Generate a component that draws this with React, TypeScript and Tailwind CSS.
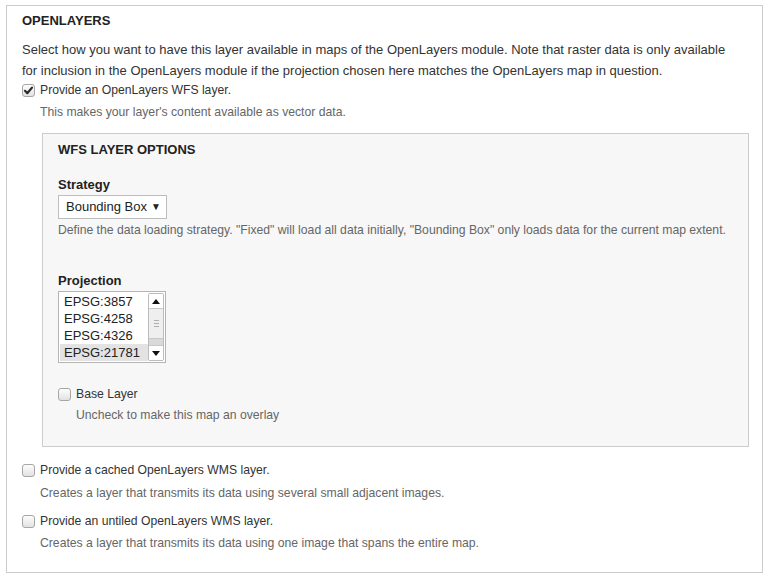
import { FC } from "react";

const Check: FC<{ checked?: boolean }> = ({ checked }) => (
  <span className="relative inline-block w-[13px] h-[13px] shrink-0 rounded-[3px] border border-[#a6a6a6] bg-gradient-to-b from-[#fdfdfd] to-[#e2e2e2]">
    {checked && (
      <svg viewBox="0 0 13 13" className="absolute left-[-1px] top-[-1px] w-[13px] h-[13px]">
        <path d="M3 6.8 L5.3 9.2 L10 3.6" fill="none" stroke="#2a2a2a" strokeWidth="2.2" strokeLinecap="round" strokeLinejoin="round" />
      </svg>
    )}
  </span>
);

const CheckRow: FC<{ label: string; checked?: boolean; className?: string }> = ({ label, checked, className }) => (
  <div className={"flex items-center gap-[5px] h-[18px] leading-[18px] text-[12.2px] text-[#333] " + (className || "")}>
    <Check checked={checked} />
    <span>{label}</span>
  </div>
);

const Desc: FC<{ text: string; className?: string }> = ({ text, className }) => (
  <div className={"text-[12.2px] leading-[16px] text-[#666] " + (className || "")}>{text}</div>
);

export default function App() {
  return (
    <div className="bg-white w-[767px] h-[578px] pt-[5px] pl-[6px] font-['Liberation_Sans',Arial,sans-serif]">
      <div className="w-[757px] h-[568px] border border-[#cccccc] pl-[15px] pt-[7px]">
        <div className="text-[13px] leading-[16px] font-bold text-[#222]">OPENLAYERS</div>
        <p className="mt-[10px] text-[13px] leading-[21px] text-[#333] w-[720px]">
          Select how you want to have this layer available in maps of the OpenLayers module. Note that raster data is only available for inclusion in the OpenLayers module if the projection chosen here matches the OpenLayers map in question.
        </p>
        <CheckRow label="Provide an OpenLayers WFS layer." checked />
        <Desc text="This makes your layer's content available as vector data." className="mt-[5px] pl-[18px]" />

        <div className="mt-[13px] ml-[20px] w-[707px] h-[314px] border border-[#cccccc] bg-[#f7f7f7] pl-[15px] pt-[8px]">
          <div className="text-[13px] leading-[16px] font-bold text-[#222]">WFS LAYER OPTIONS</div>

          <div className="mt-[19px] text-[13px] leading-[16px] font-bold text-[#222]">Strategy</div>
          <div className="mt-[2px] w-[109px] h-[24px] border border-[#bdbdbd] bg-white flex items-center justify-between pl-[7px] pr-[5px] text-[13px] text-[#222]">
            <span>Bounding Box</span>
            <span className="text-[10px] leading-none">▼</span>
          </div>
          <Desc text={'Define the data loading strategy. "Fixed" will load all data initially, "Bounding Box" only loads data for the current map extent.'} className="mt-[3px]" />

          <div className="mt-[35px] text-[13px] leading-[16px] font-bold text-[#222]">Projection</div>
          <div className="mt-[2px] w-[108px] h-[72px] border border-[#b5b5b5] bg-white flex p-px">
            <div className="flex-1 flex flex-col text-[13px] leading-[17px] text-[#222]">
              <div className="pl-[4px]">EPSG:3857</div>
              <div className="pl-[4px]">EPSG:4258</div>
              <div className="pl-[4px]">EPSG:4326</div>
              <div className="pl-[4px] bg-[#e3e3e3]">EPSG:21781</div>
            </div>
            <div className="w-[16px] flex flex-col border border-[#bcbcbc] rounded-[2px] bg-[#d9d9d9]">
              <div className="h-[15px] bg-white border-b border-[#c8c8c8] flex items-center justify-center">
                <svg viewBox="0 0 8 5" className="w-[8px] h-[5px]"><path d="M0 5 L4 0 L8 5 Z" fill="#111" /></svg>
              </div>
              <div className="h-[30px] bg-[#efefef] border-b border-[#c8c8c8] flex flex-col items-center justify-center gap-[2px]">
                <div className="w-[5px] h-px bg-[#b0b0b0]" />
                <div className="w-[5px] h-px bg-[#b0b0b0]" />
                <div className="w-[5px] h-px bg-[#b0b0b0]" />
              </div>
              <div className="flex-1" />
              <div className="h-[15px] bg-white border-t border-[#c8c8c8] flex items-center justify-center">
                <svg viewBox="0 0 8 5" className="w-[8px] h-[5px]"><path d="M0 0 L4 5 L8 0 Z" fill="#111" /></svg>
              </div>
            </div>
          </div>

          <CheckRow label="Base Layer" className="mt-[22px]" />
          <Desc text="Uncheck to make this map an overlay" className="mt-[4px] pl-[18px]" />
        </div>

        <CheckRow label="Provide a cached OpenLayers WMS layer." className="mt-[14px]" />
        <Desc text="Creates a layer that transmits its data using several small adjacent images." className="mt-[6px] pl-[18px]" />
        <CheckRow label="Provide an untiled OpenLayers WMS layer." className="mt-[11px]" />
        <Desc text="Creates a layer that transmits its data using one image that spans the entire map." className="mt-[5px] pl-[18px]" />
      </div>
    </div>
  );
}
